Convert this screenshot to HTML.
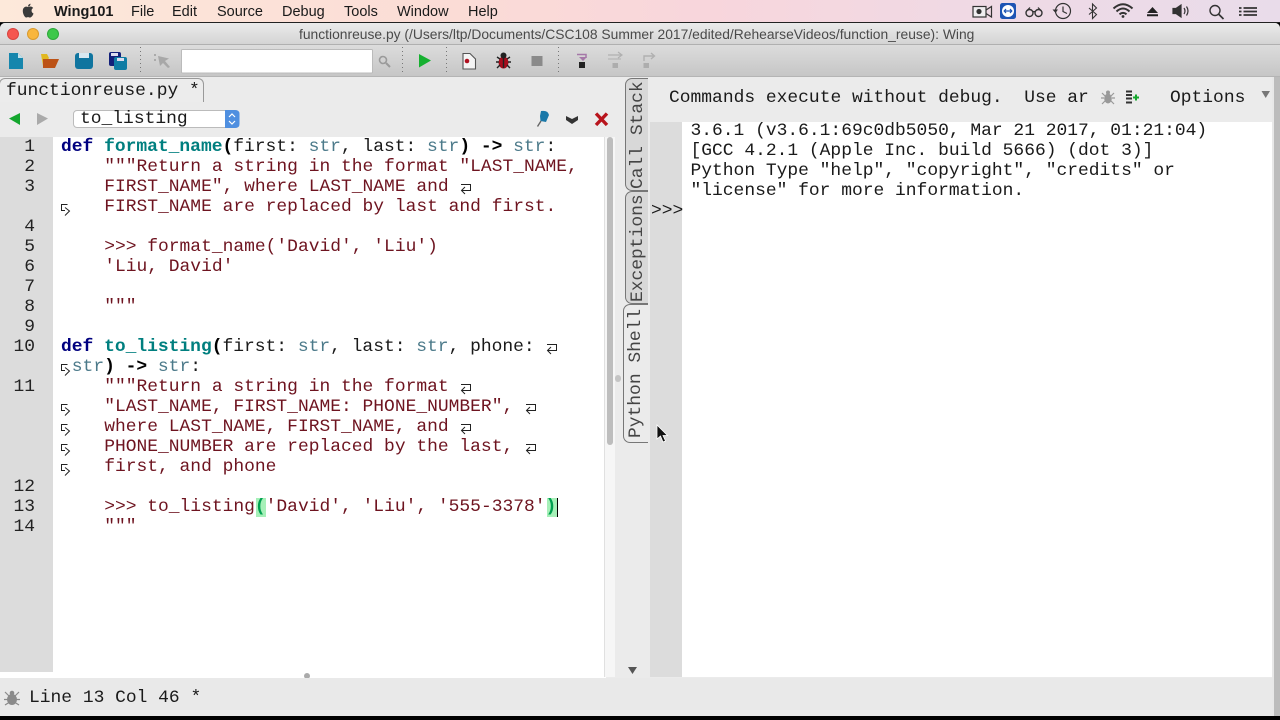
<!DOCTYPE html>
<html><head><meta charset="utf-8"><style>
html,body{margin:0;padding:0;width:1280px;height:720px;overflow:hidden;background:#000}
*{box-sizing:border-box}
.a{position:absolute}
.m{font-family:"Liberation Mono",monospace;font-size:17.95px;line-height:20px;white-space:pre;position:absolute;color:#1a1a1a;margin-top:1px}
.s{font-family:"Liberation Sans",sans-serif;font-size:14.5px;position:absolute;white-space:pre;color:#1a1a1a;top:3px;line-height:18px}
.d{color:#6e1420}.k{color:#00007f;font-weight:bold}.f{color:#007f7f;font-weight:bold}.t{color:#4c7a8a}.b{font-weight:bold;color:#000}
.n{text-align:right;width:35px;left:0;color:#222}
.v{position:absolute;transform-origin:0 0;transform:rotate(-90deg);font-family:"Liberation Mono",monospace;font-size:17.95px;line-height:20px;white-space:pre;color:#444}
svg{position:absolute;overflow:visible}
</style></head><body>
<div class="a" style="left:0;top:0;width:1280px;height:22px;background:linear-gradient(90deg,#fde9da 0%,#fbdcd6 35%,#f8d6dc 55%,#eedae6 80%,#e9dcea 100%)"></div>
<svg style="left:20px;top:3px" width="16" height="16" viewBox="0 0 16 16"><path d="M8 4C6 3 3 4 2.800 7.500 2.600 11 5 15 6.500 14.500 7.500 14 8.500 14 9.500 14.500 11 15 13 12.500 13.500 10.500 11 9.500 11 6 13.200 5 11.500 3 9.500 3.500 8 4ZM8 3.500C8 2 9.500 .8 10.500 .8 10.500 2.500 9.500 3.500 8 3.500Z" fill="#3a3a3a"/></svg>
<div class="s" style="left:54px;font-weight:bold">Wing101</div>
<div class="s" style="left:131px">File</div>
<div class="s" style="left:172px">Edit</div>
<div class="s" style="left:217px">Source</div>
<div class="s" style="left:282px">Debug</div>
<div class="s" style="left:344px">Tools</div>
<div class="s" style="left:397px">Window</div>
<div class="s" style="left:468px">Help</div>
<svg style="left:0;top:0" width="1280" height="22" viewBox="0 0 1280 22" fill="none" stroke="#333" stroke-width="1.200">
<rect x="973" y="6.500" width="13" height="10.500" fill="#f0eef0"/><circle cx="979" cy="11.500" r="2" fill="#333"/><path d="M986 10L991.500 6.500V17L986 13.500"/>
<rect x="1000" y="3" width="16" height="16" rx="2.500" fill="#1d54b4" stroke="none"/><circle cx="1008" cy="11" r="6" fill="#fff" stroke="none"/><path d="M1004.500 11H1011.500M1006 9L1004.200 11 1006 13M1010 9L1011.800 11 1010 13" stroke="#1d54b4" stroke-width="1.200"/>
<circle cx="1029.500" cy="13" r="3.500" stroke-width="1.400"/><circle cx="1038.500" cy="13" r="3.500" stroke-width="1.400"/><path d="M1033 12Q1034 11 1035 12M1026.500 11L1030 7.500M1041.500 11L1038 7.500"/>
<circle cx="1063" cy="11" r="7.500"/><path d="M1063 6.500V11.500L1067 13.500"/><path d="M1052.500 9.500H1058L1055.500 13Z" fill="#333" stroke="none"/>
<path d="M1089 8L1096.500 14.500 1092.500 18.500V4L1096.500 8 1089 14.500" stroke-width="1.100"/>
<path d="M1113.500 8.500Q1123 0 1132.500 8.500M1116.500 11.500Q1123 5.500 1129.500 11.500M1119.500 14.300Q1123 11.500 1126.500 14.300" stroke-width="2"/><circle cx="1123" cy="16.500" r="1.400" fill="#333" stroke="none"/>
<path d="M1147 13L1152.500 7 1158 13ZM1147 14.300H1158V16.300H1147Z" fill="#222" stroke="none"/>
<path d="M1173 8.500H1176L1181 5V17L1176 13.500H1173Z" fill="#333"/><path d="M1184 8Q1186 11 1184 14M1186.500 6.500Q1189.500 11 1186.500 15.500"/>
<circle cx="1215" cy="10.500" r="5" stroke-width="1.400"/><path d="M1218.500 14L1223.500 19" stroke-width="1.700"/>
<path d="M1239 8H1241.500M1243.500 8H1257M1239 11.500H1241.500M1243.500 11.500H1257M1239 15H1241.500M1243.500 15H1257" stroke-width="1.800"/>
</svg>
<div class="a" style="left:0;top:22px;width:1280px;height:1px;background:#222"></div>

<div class="a" style="left:0;top:23px;width:1280px;height:693px;background:#ebebeb;border-radius:5px 5px 0 0"></div>
<div class="a" style="left:0;top:23px;width:1280px;height:22px;background:linear-gradient(#ebebeb,#d4d4d4);border-radius:5px 5px 0 0;border-bottom:1px solid #b0b0b0"></div>
<div class="a" style="left:7px;top:28px;width:12px;height:12px;border-radius:50%;background:#f5564f;border:1px solid #d8453f"></div>
<div class="a" style="left:27px;top:28px;width:12px;height:12px;border-radius:50%;background:#f8b63e;border:1px solid #d99a2f"></div>
<div class="a" style="left:47px;top:28px;width:12px;height:12px;border-radius:50%;background:#3ec84a;border:1px solid #2fa83b"></div>
<div class="a" style="left:299px;top:26px;font-family:'Liberation Sans',sans-serif;font-size:13.85px;line-height:17px;color:#4a4a4a;white-space:pre">functionreuse.py (/Users/ltp/Documents/CSC108 Summer 2017/edited/RehearseVideos/function_reuse): Wing</div>

<div class="a" style="left:0;top:45px;width:1280px;height:32px;background:linear-gradient(#dcdcdc,#c6c6c6);border-bottom:1px solid #b4b4b4"></div>
<svg style="left:0;top:45px" width="680" height="32" viewBox="0 0 680 32">
<path d="M9 8H18L23 13V24H9Z" fill="#1686ad"/><path d="M18 8V13H23Z" fill="#bfe0ea"/>
<path d="M41 9L47 9 49 13 43 21Z" fill="#e1b820"/><path d="M43 14H59L55 23H43Z" fill="#bc5216"/>
<rect x="75" y="8" width="18" height="16" rx="3" fill="#10759f"/><rect x="79" y="8" width="10" height="5" fill="#d8e8f0"/>
<rect x="109" y="7" width="12" height="14" rx="2" fill="#12207a"/><rect x="114" y="12" width="13" height="13" rx="2" fill="#0f7ca4"/><rect x="111" y="8" width="7" height="3" fill="#dde"/><rect x="117" y="13" width="7" height="3" fill="#dde"/>
<path d="M140.500 2V30M402.500 2V30M446.500 2V30M558.500 2V30" stroke="#777" stroke-dasharray="1 3"/>
<path d="M155 9V11M155 14V16" stroke="#aaa" stroke-width="2"/><path d="M158 11L169 13.500 165 16 170 22 168 23 163 18 160 21Z" fill="#a8a8a8"/>
<rect x="181.500" y="4.500" width="191" height="23.500" rx="1" fill="#fff" stroke="#bbb"/>
<circle cx="383" cy="15" r="3.500" fill="none" stroke="#9a9a9a" stroke-width="1.600"/><path d="M386 18L390 22" stroke="#9a9a9a" stroke-width="2"/>
<path d="M419 9L431 15.500 419 22.500Z" fill="#16b030"/>
<path d="M463 8.500H470L475.500 14V24H463Z" fill="#f4f4f4" stroke="#555" stroke-width="1.100"/><circle cx="467" cy="16" r="2.300" fill="#b01020"/>
<ellipse cx="503.500" cy="17.500" rx="5" ry="6" fill="#a80c1c"/><circle cx="503.500" cy="10.500" r="3" fill="#222"/><path d="M497 12L500 14M510 12L507 14M496 17H499M511 17H508M497 23L500 20M510 23L507 20M503.500 11V23" stroke="#222" stroke-width="1.400"/>
<rect x="531.500" y="11" width="11" height="10" fill="#8a8a8a"/>
<path d="M577 9.500H586V13" fill="none" stroke="#a578a8" stroke-width="1.500"/><path d="M579 12H587L583 16Z" fill="#a578a8"/><rect x="579" y="17" width="6" height="6" fill="#222"/>
<path d="M608 10H621M618 7L622 10 618 13" fill="none" stroke="#b0b0b0" stroke-width="1.200"/><path d="M608 14H621" stroke="#b0b0b0" stroke-width="1"/><rect x="612.500" y="18" width="5.500" height="5" fill="#adadad"/>
<path d="M644 16V11H654M651 8L654.500 11 651 14" fill="none" stroke="#b0b0b0" stroke-width="1.400"/><rect x="643.500" y="18" width="5.500" height="5" fill="#adadad"/>
</svg>

<div class="a" style="left:-1px;top:78px;width:205px;height:24px;background:#ececec;border:1px solid #999;border-bottom:none;border-radius:6px 6px 0 0"></div>
<div class="m" style="left:6px;top:80px">functionreuse.py *</div>

<svg style="left:0;top:105px" width="620" height="30" viewBox="0 0 620 30">
<path d="M9 13.500L20 8V20Z" fill="#14a62e"/><path d="M37 8L48 13.500 37 20Z" fill="#aaa"/>
<rect x="73.500" y="5.500" width="165" height="17" rx="3.500" fill="#fff" stroke="#bbb"/>
<path d="M225 5H235Q239.500 5 239.500 9V19Q239.500 23 235 23H225Z" fill="#4f8fe0"/>
<path d="M229 12L232 9 235 12M229 16L232 19 235 16" stroke="#fff" fill="none" stroke-width="1.200"/>
<path d="M541 6Q548 5 549 10L546 17 540.500 16 540 11Z" fill="#1a78a8"/><path d="M541 16L537.500 21.500" stroke="#666" stroke-width="1.400"/>
<path d="M566 11L572 14 578 11V15L572 19 566 15Z" fill="#333"/>
<path d="M596 8.500L607 20M607 8.500L596 20" stroke="#b8141c" stroke-width="3.400"/>
</svg>
<div class="m" style="left:80px;top:108px">to_listing</div>

<div class="a" style="left:0;top:137px;width:606px;height:541px;background:#fff"></div>
<div class="a" style="left:0;top:137px;width:53px;height:535px;background:#dcdcdc"></div>
<div class="a" style="left:604px;top:137px;width:11px;height:540px;background:#f6f6f6;border-left:1px solid #e0e0e0"></div>
<div class="a" style="left:606.500px;top:137px;width:6.500px;height:308px;background:#bdbdbd;border-radius:4px"></div>
<div class="a" style="left:615px;top:77px;width:7px;height:601px;background:#ebebeb"></div>
<div class="a" style="left:615px;top:375px;width:6px;height:7px;background:#c4c4c4;border-radius:3px"></div>
<div class="a" style="left:304px;top:673px;width:6px;height:6px;background:#aaa;border-radius:50%"></div>

<div class="m n" style="top:136px">1</div>
<div class="m n" style="top:156px">2</div>
<div class="m n" style="top:176px">3</div>
<div class="m n" style="top:216px">4</div>
<div class="m n" style="top:236px">5</div>
<div class="m n" style="top:256px">6</div>
<div class="m n" style="top:276px">7</div>
<div class="m n" style="top:296px">8</div>
<div class="m n" style="top:316px">9</div>
<div class="m n" style="top:336px">10</div>
<div class="m n" style="top:376px">11</div>
<div class="m n" style="top:476px">12</div>
<div class="m n" style="top:496px">13</div>
<div class="m n" style="top:516px">14</div>

<div class="m" style="left:61px;top:136px"><span class="k">def</span> <span class="f">format_name</span><span class="b">(</span>first: <span class="t">str</span>, last: <span class="t">str</span><span class="b">) -&gt;</span> <span class="t">str</span>:</div>
<div class="m d" style="left:104.200px;top:156px">"""Return a string in the format "LAST_NAME,</div>
<div class="m d" style="left:104.200px;top:176px">FIRST_NAME", where LAST_NAME and</div>
<div class="m d" style="left:104.200px;top:196px">FIRST_NAME are replaced by last and first.</div>
<div class="m d" style="left:104.200px;top:236px">&gt;&gt;&gt; format_name('David', 'Liu')</div>
<div class="m d" style="left:104.200px;top:256px">'Liu, David'</div>
<div class="m d" style="left:104.200px;top:296px">"""</div>
<div class="m" style="left:61px;top:336px"><span class="k">def</span> <span class="f">to_listing</span><span class="b">(</span>first: <span class="t">str</span>, last: <span class="t">str</span>, phone:</div>
<div class="m" style="left:71.800px;top:356px"><span class="t">str</span><span class="b">) -&gt;</span> <span class="t">str</span>:</div>
<div class="m d" style="left:104.200px;top:376px">"""Return a string in the format</div>
<div class="m d" style="left:104.200px;top:396px">"LAST_NAME, FIRST_NAME: PHONE_NUMBER",</div>
<div class="m d" style="left:104.200px;top:416px">where LAST_NAME, FIRST_NAME, and</div>
<div class="m d" style="left:104.200px;top:436px">PHONE_NUMBER are replaced by the last,</div>
<div class="m d" style="left:104.200px;top:456px">first, and phone</div>
<div class="a" style="left:255.500px;top:498px;width:10.500px;height:19px;background:#a6f0b8"></div>
<div class="a" style="left:546.500px;top:498px;width:10px;height:19px;background:#a6f0b8"></div>
<div class="m d" style="left:104.200px;top:496px">&gt;&gt;&gt; to_listing<span style="color:#00a050;font-weight:bold">(</span>'David', 'Liu', '555-3378'<span style="color:#00a050;font-weight:bold">)</span></div>
<div class="a" style="left:557px;top:498px;width:1px;height:19px;background:#000"></div>
<div class="m d" style="left:104.200px;top:516px">"""</div>

<svg style="left:0;top:0" width="620" height="520" viewBox="0 0 620 520" fill="none" stroke="#222" stroke-width="1">
<path d="M67.500 204.500H61.500V210.500H65M65 207.500L69.500 211 65 215.500"/>
<path d="M67.500 364.500H61.500V370.500H65M65 367.500L69.500 371 65 375.500"/>
<path d="M67.500 404.500H61.500V410.500H65M65 407.500L69.500 411 65 415.500"/>
<path d="M67.500 424.500H61.500V430.500H65M65 427.500L69.500 431 65 435.500"/>
<path d="M67.500 444.500H61.500V450.500H65M65 447.500L69.500 451 65 455.500"/>
<path d="M67.500 464.500H61.500V470.500H65M65 467.500L69.500 471 65 475.500"/>
<path d="M461 184.500H470.500V190.500H462M465 187L461.500 190.500 465 194"/>
<path d="M547 344.500H556.500V350.500H548M551 347L547.500 350.500 551 354"/>
<path d="M461 384.500H470.500V390.500H462M465 387L461.500 390.500 465 394"/>
<path d="M526 404.500H535.500V410.500H527M530 407L526.500 410.500 530 414"/>
<path d="M461 424.500H470.500V430.500H462M465 427L461.500 430.500 465 434"/>
<path d="M526 444.500H535.500V450.500H527M530 447L526.500 450.500 530 454"/>
</svg>

<!-- side tabs -->
<div class="a" style="left:622px;top:77px;width:28px;height:601px;background:#ebebeb"></div>
<div class="a" style="left:625px;top:78px;width:23px;height:113px;background:#d8d8d8;border:1px solid #777;border-right:none;border-radius:7px 0 0 7px"></div>
<div class="a" style="left:625px;top:191px;width:23px;height:113px;background:#d8d8d8;border:1px solid #777;border-right:none;border-radius:7px 0 0 7px"></div>
<div class="a" style="left:623px;top:304px;width:25px;height:139px;background:#ebebeb;border:1px solid #777;border-right:none;border-radius:7px 0 0 7px"></div>
<div class="v" style="left:628px;top:189px">Call Stack</div>
<div class="v" style="left:628px;top:302px">Exceptions</div>
<div class="v" style="left:626px;top:438px">Python Shell</div>

<!-- shell -->
<div class="m" style="left:669px;top:87px">Commands execute without debug.  Use ar</div>
<div class="m" style="left:1170px;top:87px">Options</div>
<svg style="left:1095px;top:88px" width="180" height="20" viewBox="0 0 180 20">
<ellipse cx="13" cy="10.500" rx="3.800" ry="5" fill="#999"/><circle cx="13" cy="4.500" r="2" fill="#999"/><path d="M7 5L10 8M19 5L16 8M6 10H9M20 10H17M7 16L10 13M19 16L16 13" stroke="#999" stroke-width="1.200"/>
<path d="M31 3.500H37M31 7H37M31 10.500H37M31 14.500H37" stroke="#333" stroke-width="2"/><path d="M38 9.500H44M41 6.500V12.500" stroke="#16a82e" stroke-width="2"/>
<path d="M166.500 3H175L170.700 10Z" fill="#777"/>
</svg>
<div class="a" style="left:650px;top:122px;width:32px;height:555px;background:#dcdcdc"></div>
<div class="a" style="left:682px;top:122px;width:590px;height:555px;background:#fff"></div>
<div class="m" style="left:651px;top:200px">&gt;&gt;&gt;</div>
<div class="m" style="left:690.500px;top:120px">3.6.1 (v3.6.1:69c0db5050, Mar 21 2017, 01:21:04)</div>
<div class="m" style="left:690.500px;top:140px">[GCC 4.2.1 (Apple Inc. build 5666) (dot 3)]</div>
<div class="m" style="left:690.500px;top:160px">Python Type "help", "copyright", "credits" or</div>
<div class="m" style="left:690.500px;top:180px">"license" for more information.</div>
<svg style="left:628px;top:666px" width="10" height="10"><path d="M0 1H9L4.500 8Z" fill="#555"/></svg>
<svg style="left:656px;top:424px" width="14" height="20" viewBox="0 0 14 20"><path d="M1 1V15L4.500 12 7 18 9.500 17 7 11.500H11.500Z" fill="#111" stroke="#fff" stroke-width=".8"/></svg>

<!-- status -->
<div class="a" style="left:0;top:678px;width:1280px;height:38px;background:#e9e9e9"></div>
<svg style="left:3px;top:689px" width="18" height="18" viewBox="0 0 18 18"><ellipse cx="9" cy="10.500" rx="5" ry="5.500" fill="#8a8a8a"/><circle cx="9" cy="4" r="2.300" fill="#8a8a8a"/><path d="M2 3L6 7M16 3L12 7M1 10.500H5M17 10.500H13M2 16L6 13.500M16 16L12 13.500" stroke="#8a8a8a" stroke-width="1.200"/></svg>
<div class="m" style="left:29px;top:687px">Line 13 Col 46 *</div>
<div class="a" style="left:1274px;top:77px;width:6px;height:639px;background:#bcbcbc"></div>
<div class="a" style="left:1272px;top:77px;width:2px;height:639px;background:#e8e8e8"></div>
<div class="a" style="left:0;top:716px;width:1280px;height:4px;background:#000"></div>
</body></html>
